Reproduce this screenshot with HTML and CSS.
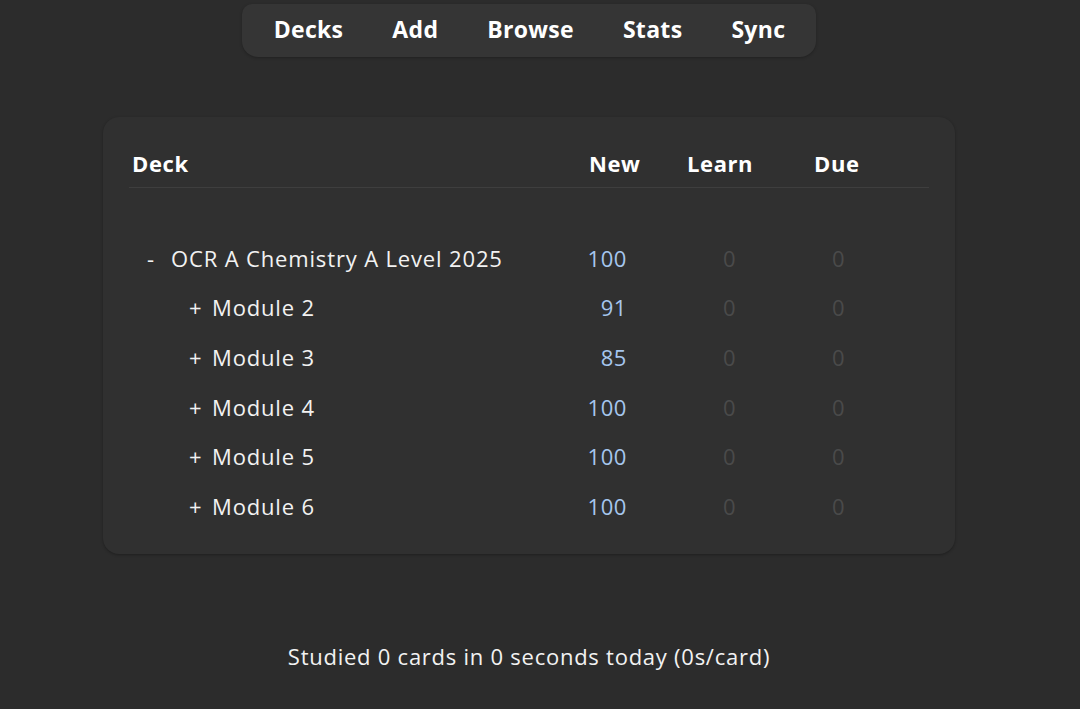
FILE: index.html
```html
<!DOCTYPE html>
<html>
<head>
<meta charset="utf-8">
<link rel="stylesheet" href="styles.css">
</head>
<body>
<div class="page">
  <nav class="topbar">
    <span class="nav-item">Decks</span>
    <span class="nav-item">Add</span>
    <span class="nav-item">Browse</span>
    <span class="nav-item">Stats</span>
    <span class="nav-item">Sync</span>
  </nav>

  <section class="card">
    <div class="row head">
      <div class="c-deck">Deck</div>
      <div class="c-new">New</div>
      <div class="c-learn">Learn</div>
      <div class="c-due">Due</div>
    </div>
    <div class="spacer"></div>
    <div class="row">
      <div class="c-deck top"><span class="toggle">-</span>OCR A Chemistry A Level 2025</div>
      <div class="c-new num">100</div>
      <div class="c-learn zero">0</div>
      <div class="c-due zero">0</div>
    </div>
    <div class="row">
      <div class="c-deck sub"><span class="toggle">+</span>Module 2</div>
      <div class="c-new num">91</div>
      <div class="c-learn zero">0</div>
      <div class="c-due zero">0</div>
    </div>
    <div class="row">
      <div class="c-deck sub"><span class="toggle">+</span>Module 3</div>
      <div class="c-new num">85</div>
      <div class="c-learn zero">0</div>
      <div class="c-due zero">0</div>
    </div>
    <div class="row">
      <div class="c-deck sub"><span class="toggle">+</span>Module 4</div>
      <div class="c-new num">100</div>
      <div class="c-learn zero">0</div>
      <div class="c-due zero">0</div>
    </div>
    <div class="row">
      <div class="c-deck sub"><span class="toggle">+</span>Module 5</div>
      <div class="c-new num">100</div>
      <div class="c-learn zero">0</div>
      <div class="c-due zero">0</div>
    </div>
    <div class="row">
      <div class="c-deck sub"><span class="toggle">+</span>Module 6</div>
      <div class="c-new num">100</div>
      <div class="c-learn zero">0</div>
      <div class="c-due zero">0</div>
    </div>
  </section>

  <p class="studied">Studied 0 cards in 0 seconds today (0s/card)</p>
</div>
</body>
</html>
```

FILE: styles.css
```css
html, body {
  margin: 0;
  padding: 0;
  background: #2c2c2c;
  color: #f2f2f2;
  font-family: "Open Sans", "Noto Sans", sans-serif;
  height: 100%;
  overflow: hidden;
}

.page {
  width: 1058px;
  display: flex;
  flex-direction: column;
  align-items: center;
}

.topbar {
  margin-top: 4px;
  height: 53px;
  box-sizing: border-box;
  padding: 0 31px 0 32px;
  display: flex;
  align-items: center;
  gap: 49px;
  background: #353535;
  border-radius: 10px 10px 16px 16px;
  box-shadow: 0 1px 3px rgba(0, 0, 0, 0.25);
}

.nav-item {
  font-size: 23px;
  font-weight: 700;
  color: #ffffff;
  letter-spacing: 0.3px;
  line-height: 1;
  padding-bottom: 2px;
}

.card {
  margin-top: 60px;
  width: 852px;
  box-sizing: border-box;
  padding: 22px 26px 23px 26px;
  background: #303030;
  border-radius: 16px;
  box-shadow: 0 1px 3px rgba(0, 0, 0, 0.3);
}

.row {
  display: grid;
  grid-template-columns: 450px 80px 120px 120px 30px;
  height: 49.6px;
  align-items: center;
  font-size: 22px;
  letter-spacing: 0.85px;
  white-space: nowrap;
}

.row.head {
  height: 48px;
  font-weight: 700;
  color: #ffffff;
  border-bottom: 1px solid #3e3e3e;
  letter-spacing: 0.6px;
}

.head .c-deck { padding-left: 3px; }
.head .c-new { padding-left: 10px; }
.head .c-learn { padding-left: 28px; }
.head .c-due { padding-left: 35px; }

.spacer { height: 45px; }

.c-deck.top { padding-left: 18px; }
.c-deck.sub { padding-left: 60px; }

.toggle {
  display: inline-block;
  width: 23px;
}
.top .toggle { width: 24px; }

.num {
  color: #a6c6ee;
  text-align: right;
  padding-right: 32px;
  letter-spacing: 0.6px;
}

.zero {
  color: #4a4a4a;
}
.c-learn.zero { padding-left: 64px; }
.c-due.zero { padding-left: 53px; }

.studied {
  margin: 87px 0 0 0;
  font-size: 22px;
  letter-spacing: 0.75px;
  color: #f2f2f2;
}
```
